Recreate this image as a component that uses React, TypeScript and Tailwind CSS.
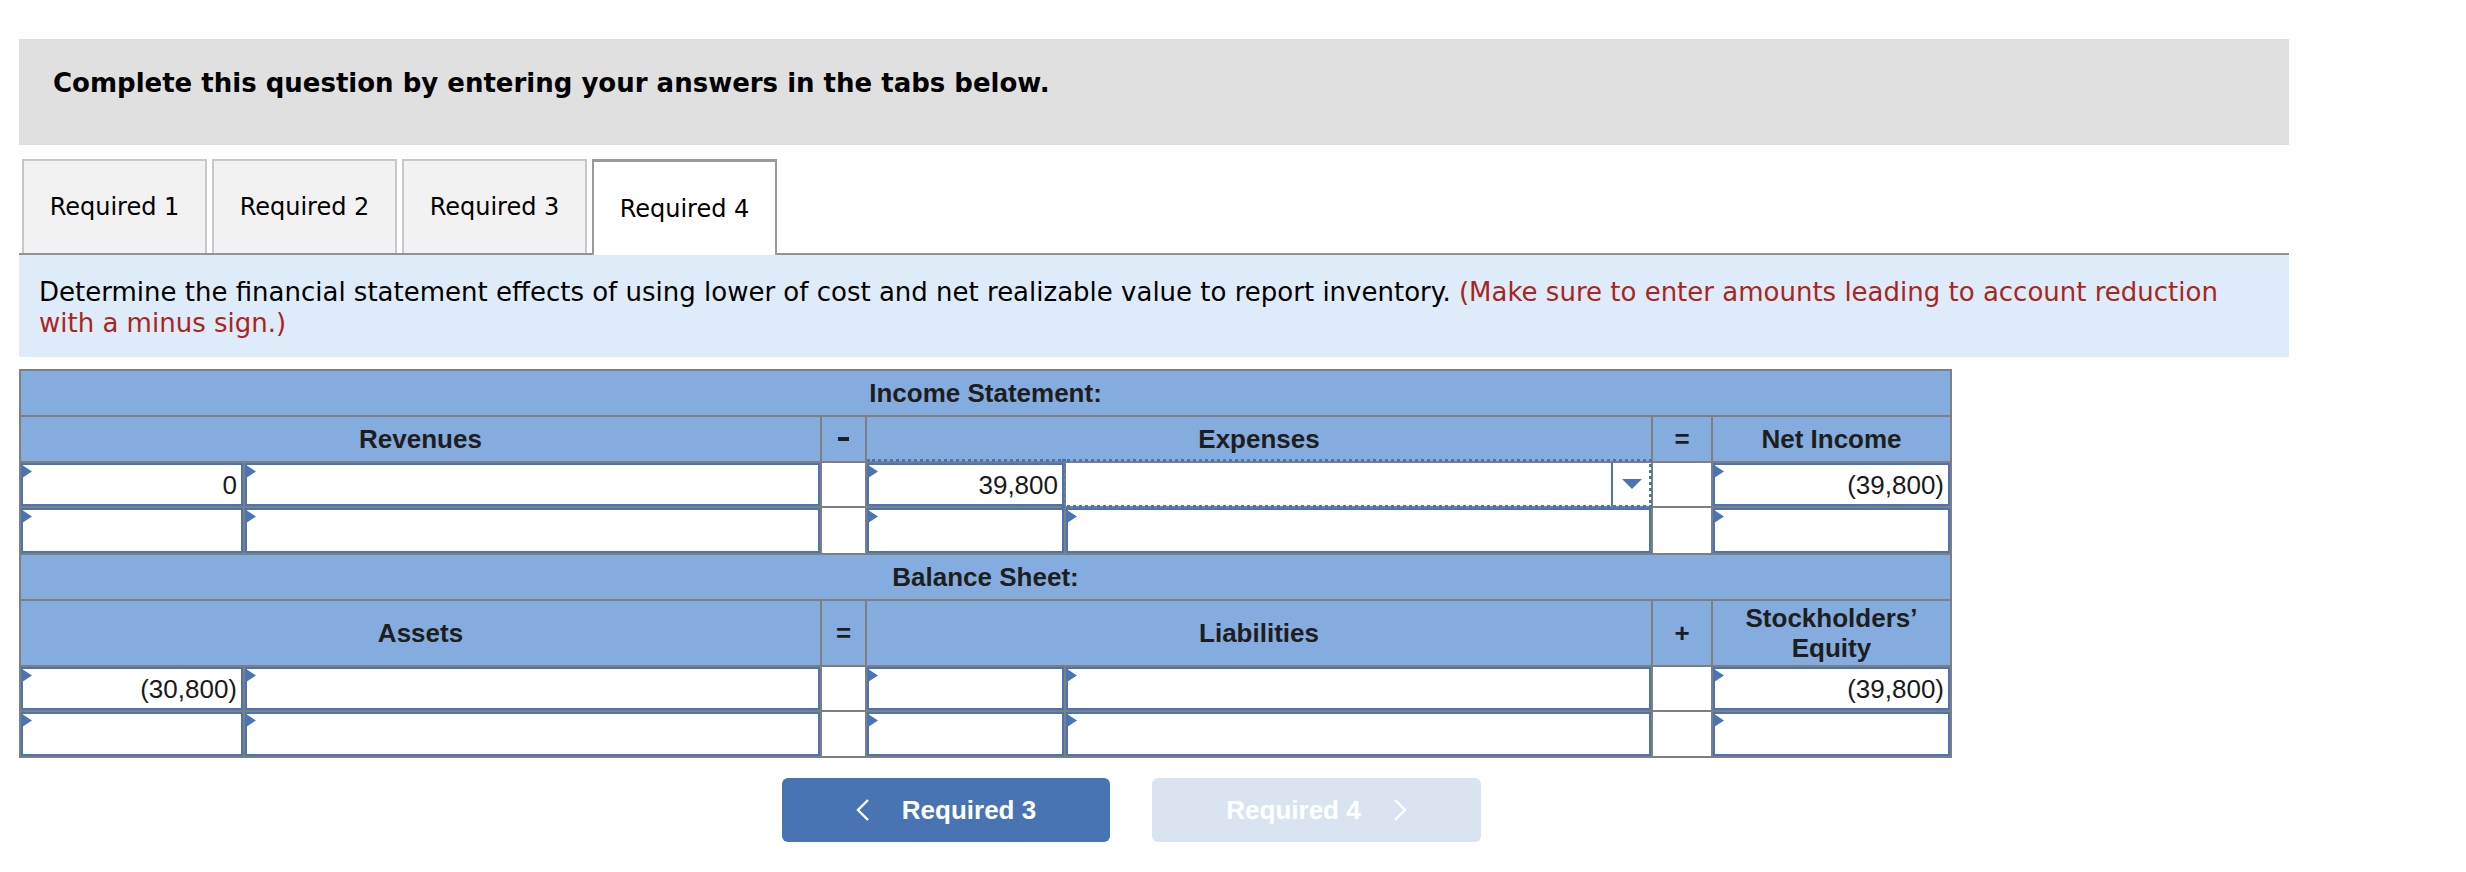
import React from "react";

const BLUE = "#4a74b4";

function Flag() {
  return (
    <svg width="10" height="13" viewBox="0 0 10 13" className="absolute left-[-1px] top-0">
      <polygon points="0,0 10,6.5 0,13" fill={BLUE} />
    </svg>
  );
}

function Inp({ v, h }: { v?: string; h: string }) {
  return (
    <div className={`relative bg-white border-2 border-[#4a74b4] flex items-center justify-end pr-[4px] ${h}`}>
      <Flag />
      <span className="leading-none">{v}</span>
    </div>
  );
}

function Op({ h }: { h: string }) {
  return <div className={`bg-white ${h}`} />;
}

function Hd({ children, span, h }: { children?: React.ReactNode; span: string; h: string }) {
  return (
    <div className={`bg-[#84acdf] flex items-center justify-center text-center font-bold text-[#1e1e1e] leading-[30px] ${span} ${h}`}>
      {children}
    </div>
  );
}

function Chevron({ dir }: { dir: "l" | "r" }) {
  return (
    <svg width="14" height="24" viewBox="0 0 14 24">
      <polyline
        points={dir === "l" ? "12,2 2,12 12,22" : "2,2 12,12 2,22"}
        fill="none"
        stroke="white"
        strokeWidth="2.4"
      />
    </svg>
  );
}

export default function App() {
  const tabs = ["Required 1", "Required 2", "Required 3", "Required 4"];
  return (
    <div className="bg-white w-[2466px] h-[872px] pt-[39px] pl-[19px]" style={{ fontFamily: "'DejaVu Sans', Verdana, sans-serif" }}>
      <div className="w-[2270px]">
        {/* header */}
        <div className="h-[106px] bg-[#e0e0e0] pt-[29px] pl-[34px]">
          <div className="font-bold text-[26px] leading-[30px] text-black whitespace-nowrap">
            Complete this question by entering your answers in the tabs below.
          </div>
        </div>

        {/* tabs */}
        <div className="mt-[14px] flex items-end gap-[5px] pl-[3px] border-b-2 border-[#929292] h-[96px]">
          {tabs.map((t, i) =>
            i === 3 ? (
              <div
                key={t}
                className="w-[185px] h-[96px] mb-[-2px] bg-white border-2 border-b-0 border-[#9a9a9a] border-t-[3px] flex items-center justify-center text-[24px] text-black"
              >
                {t}
              </div>
            ) : (
              <div
                key={t}
                className="w-[185px] h-[94px] bg-[#f2f2f2] border-2 border-b-0 border-[#c8c8c8] flex items-center justify-center text-[24px] text-black"
              >
                {t}
              </div>
            )
          )}
        </div>

        {/* instructions */}
        <div className="h-[102px] bg-[#deebf8] pt-[22px] pl-[20px] text-[26px] leading-[31px] text-black">
          <div className="whitespace-nowrap">
            Determine the financial statement effects of using lower of cost and net realizable value to report inventory.{" "}
            <span className="text-[#a8261f]">(Make sure to enter amounts leading to account reduction</span>
          </div>
          <div className="text-[#a8261f]">with a minus sign.)</div>
        </div>
      </div>

      {/* table */}
      <div
        className="mt-[12px] w-max grid grid-cols-[222px_575px_43px_197px_585px_58px_237px] gap-[2px] bg-[#7f7f7f] p-[2px] text-[26px] text-[#1a1a1a]"
        style={{ fontFamily: "'Liberation Sans', Arial, sans-serif" }}
      >
        <Hd span="col-span-7" h="h-[44px]">Income Statement:</Hd>

        <Hd span="col-span-2" h="h-[44px]">Revenues</Hd>
        <Hd span="" h="h-[44px]">
          <span className="inline-block w-[11px] h-[4px] bg-[#1e1e1e]" />
        </Hd>
        <Hd span="col-span-2" h="h-[44px]">Expenses</Hd>
        <Hd span="" h="h-[44px]">=</Hd>
        <Hd span="" h="h-[44px]">Net Income</Hd>

        {/* row 1 */}
        <Inp v="0" h="h-[43px]" />
        <Inp h="h-[43px]" />
        <Op h="h-[43px]" />
        <div className="relative">
          <Inp v="39,800" h="h-[43px]" />
          <div className="absolute left-0 right-[-2px] top-[-4px] h-[3px] border-t-[3px] border-dotted border-[#4a74b4]" />
        </div>
        <div className="relative bg-white h-[43px] flex justify-end">
          <div className="w-[2px] h-full bg-[#4a74b4] mr-[38px]" />
          <svg width="20" height="10" viewBox="0 0 20 10" className="absolute right-[9px] top-[16px]">
            <polygon points="0,0 20,0 10,10" fill={BLUE} />
          </svg>
          <div className="absolute left-[-4px] top-[-4px] right-[-1px] bottom-[-2px] border-[3px] border-dotted border-[#4a74b4]" />
        </div>
        <Op h="h-[43px]" />
        <Inp v="(39,800)" h="h-[43px]" />

        {/* row 2 */}
        <Inp h="h-[45px]" />
        <Inp h="h-[45px]" />
        <Op h="h-[45px]" />
        <Inp h="h-[45px]" />
        <Inp h="h-[45px]" />
        <Op h="h-[45px]" />
        <Inp h="h-[45px]" />

        <Hd span="col-span-7" h="h-[44px]">Balance Sheet:</Hd>

        <Hd span="col-span-2" h="h-[64px]">Assets</Hd>
        <Hd span="" h="h-[64px]">=</Hd>
        <Hd span="col-span-2" h="h-[64px]">Liabilities</Hd>
        <Hd span="" h="h-[64px]">+</Hd>
        <Hd span="" h="h-[64px]">
          <span>
            Stockholders’
            <br />
            Equity
          </span>
        </Hd>

        <Inp v="(30,800)" h="h-[43px]" />
        <Inp h="h-[43px]" />
        <Op h="h-[43px]" />
        <Inp h="h-[43px]" />
        <Inp h="h-[43px]" />
        <Op h="h-[43px]" />
        <Inp v="(39,800)" h="h-[43px]" />

        <Inp h="h-[44px]" />
        <Inp h="h-[44px]" />
        <Op h="h-[44px]" />
        <Inp h="h-[44px]" />
        <Inp h="h-[44px]" />
        <Op h="h-[44px]" />
        <Inp h="h-[44px]" />
      </div>

      {/* buttons */}
      <div
        className="mt-[20px] ml-[763px] flex gap-[42px] font-bold text-[26px] text-white"
        style={{ fontFamily: "'Liberation Sans', Arial, sans-serif" }}
      >
        <div className="w-[328px] h-[64px] rounded-[6px] bg-[#4874b4] flex items-center justify-center gap-[32px]">
          <Chevron dir="l" />
          <span>Required 3</span>
        </div>
        <div className="w-[329px] h-[64px] rounded-[6px] bg-[#dae4f0] flex items-center justify-center gap-[32px]">
          <span>Required 4</span>
          <Chevron dir="r" />
        </div>
      </div>
    </div>
  );
}
